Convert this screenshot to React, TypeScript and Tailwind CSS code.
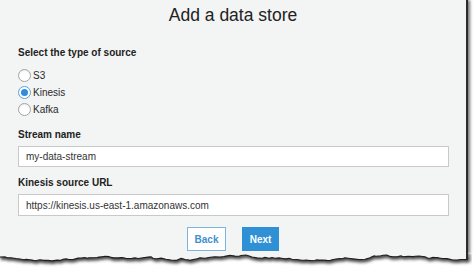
import React from 'react';

const font = { fontFamily: '"Liberation Sans", Arial, sans-serif' };

// jagged bottom edge of the clipped screenshot (seeded so it stays the same)
const tornPoints = (() => {
  const pts: [number, number][] = [];
  let seed = 7;
  const rnd = () => {
    seed = (seed * 16807) % 2147483647;
    return seed / 2147483647;
  };
  let y = 4;
  for (let x = 0; x <= 468; x += 2 + Math.floor(rnd() * 4)) {
    y += (rnd() - 0.5) * 2.6;
    y += (4 + 1.5 * Math.sin(x * 0.045) - y) * 0.25;
    pts.push([x, Math.max(0.5, Math.min(9, y))]);
  }
  pts.push([468, 4]);
  return pts;
})();

const TornEdge: React.FC = () => {
  const line = tornPoints.map(([x, y]) => `${x},${y.toFixed(1)}`).join(' L');
  const back = [...tornPoints].reverse();
  const fill = `M0,0 L468,0 L${back.map(([x, y]) => `${x},${y.toFixed(1)}`).join(' L')} Z`;
  const shade = `M0,0 L468,0 L${back.map(([x, y]) => `${x + 1},${(y + 3).toFixed(1)}`).join(' L')} Z`;
  return (
    <svg width="474" height="20" viewBox="0 0 474 20" className="block">
      <defs>
        <filter id="blur" x="-5%" y="-50%" width="110%" height="250%">
          <feGaussianBlur stdDeviation="1.7" />
        </filter>
      </defs>
      <path d={shade} fill="#4a4a4a" filter="url(#blur)" />
      <path d="M466,0 L471,0 L471,8 L466,8 Z" fill="#555" filter="url(#blur)" opacity="0.6" />
      <path d={fill} fill="#f3f4f4" />
      <path d={`M${line}`} fill="none" stroke="#1e1e1e" strokeWidth="1.1" />
      <rect x="466" y="0" width="2" height="5" fill="#2b2b2b" />
    </svg>
  );
};

const Radio: React.FC<{ label: string; checked?: boolean }> = ({ label, checked }) => (
  <div className="flex items-center h-[17px]">
    <span
      className={
        checked
          ? 'w-[13px] h-[13px] rounded-full border border-[#5b9fd6] bg-white flex items-center justify-center'
          : 'w-[13px] h-[13px] rounded-full border border-[#a3a3a3] bg-white shadow-[inset_0_1px_1px_rgba(0,0,0,0.08)]'
      }
    >
      {checked && <span className="w-[7px] h-[7px] rounded-full bg-[#2f8de0]" />}
    </span>
    <span className="ml-[2px] text-[10px] leading-[12px] text-[#2a2a2a]">{label}</span>
  </div>
);

export default function App() {
  return (
    <div className="w-[474px] h-[274px] bg-white overflow-hidden" style={font}>
      <div className="w-[466px] h-[254px] bg-[#f3f4f4] shadow-[2px_0_0_#2b2b2b,4px_0_3px_rgba(0,0,0,0.55)] flex flex-col pl-[18px]">
        <div className="pt-[5px] pr-[18px] text-center text-[17.5px] leading-[20px] text-[#222]">
          Add a data store
        </div>

        <div className="mt-[22px] text-[10px] leading-[12px] font-bold text-[#222]">Select the type of source</div>
        <div className="mt-[8px] flex flex-col">
          <Radio label="S3" />
          <Radio label="Kinesis" checked />
          <Radio label="Kafka" />
        </div>

        <div className="mt-[11px] text-[10px] leading-[12px] font-bold text-[#222]">Stream name</div>
        <div className="mt-[5px] w-[431px] h-[21px] bg-white border border-[#c9c9c9] flex items-center pl-[7px] text-[10px] text-[#333]">
          my-data-stream
        </div>

        <div className="mt-[10px] text-[10px] leading-[12px] font-bold text-[#222]">Kinesis source URL</div>
        <div className="mt-[5px] w-[431px] h-[22px] bg-white border border-[#c9c9c9] flex items-center pl-[7px] text-[10px] text-[#333]">
          https://kinesis.us-east-1.amazonaws.com
        </div>

        <div className="mt-[11px] flex justify-center gap-[16px] pr-[18px]">
          <button className="w-[39px] h-[24px] bg-white border border-[#7db5e0] text-[#3f8fce] text-[10px] font-bold">
            Back
          </button>
          <button className="w-[37px] h-[24px] bg-[#2f90d6] text-white text-[10px] font-bold">
            Next
          </button>
        </div>
      </div>
      <TornEdge />
    </div>
  );
}
